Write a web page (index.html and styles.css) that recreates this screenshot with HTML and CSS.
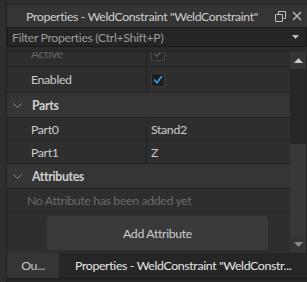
FILE: index.html
```html
<!DOCTYPE html>
<html>
<head>
<meta charset="utf-8">
<link rel="stylesheet" href="styles.css">
</head>
<body>
<div class="screen">
  <div class="leftstrip"></div>
  <div class="panel">
    <div class="topstrip"></div>
    <div class="titlebar">
      <span class="title">Properties - WeldConstraint "WeldConstraint"</span>
      <span class="winicons">
        <svg width="11" height="11" viewBox="0 0 11 11"><path d="M3.5 0.5h7v7h-2M0.5 3.5h7v7h-7z M3.5 3.5v-3" fill="none" stroke="#bdbdbd" stroke-width="1"/></svg>
        <svg width="10" height="10" viewBox="0 0 10 10"><path d="M1 1L9 9M9 1L1 9" stroke="#bdbdbd" stroke-width="1.3"/></svg>
      </span>
    </div>
    <div class="filter">
      <span class="filter-text">Filter Properties (Ctrl+Shift+P)</span>
      <svg width="7" height="4" viewBox="0 0 7 4"><path d="M0 0h7L3.5 4z" fill="#bbbbbb"/></svg>
    </div>
    <div class="body">
      <div class="viewport">
        <div class="list">
          <div class="row tall">
            <div class="name dim">Active</div>
            <div class="value"><span class="check disabled"><svg width="10" height="9" viewBox="0 0 10 9"><path d="M1 4.5L4 7.5L9 1" fill="none" stroke="#5a5a5a" stroke-width="1.4"/></svg></span></div>
          </div>
          <div class="row tall">
            <div class="name">Enabled</div>
            <div class="value"><span class="check"><svg width="10" height="9" viewBox="0 0 10 9"><path d="M1 4.5L4 7.5L9 1" fill="none" stroke="#3aa0f0" stroke-width="1.5"/></svg></span></div>
          </div>
          <div class="header">
            <svg class="chev" width="9" height="5" viewBox="0 0 9 5"><path d="M0.5 0.5L4.5 4.5L8.5 0.5" fill="none" stroke="#8a8a8a" stroke-width="1"/></svg>
            <span>Parts</span>
          </div>
          <div class="row">
            <div class="name">Part0</div>
            <div class="value">Stand2</div>
          </div>
          <div class="row">
            <div class="name">Part1</div>
            <div class="value">Z</div>
          </div>
          <div class="header">
            <svg class="chev" width="9" height="5" viewBox="0 0 9 5"><path d="M0.5 0.5L4.5 4.5L8.5 0.5" fill="none" stroke="#8a8a8a" stroke-width="1"/></svg>
            <span>Attributes</span>
          </div>
          <div class="empty">No Attribute has been added yet</div>
          <div class="btnrow"><div class="addbtn">Add Attribute</div></div>
        </div>
      </div>
      <div class="scrollbar">
        <div class="sbtn"><svg width="9" height="5" viewBox="0 0 9 5"><path d="M0 5h9L4.5 0z" fill="#c8c8c8"/></svg></div>
        <div class="track">
          <div class="thumb"></div>
        </div>
        <div class="sbtn down"><svg width="9" height="5" viewBox="0 0 9 5"><path d="M0 0h9L4.5 5z" fill="#8a8a8a"/></svg></div>
      </div>
    </div>
    <div class="tabs">
      <div class="tab">Ou...</div>
      <div class="tab active">Properties - WeldConstraint "WeldConstr...</div>
    </div>
    <div class="bottomstrip"></div>
  </div>
</div>
</body>
</html>
```
FILE: styles.css
```css
* { box-sizing: border-box; }
html, body { margin: 0; padding: 0; }
body {
  width: 307px;
  height: 282px;
  overflow: hidden;
  background: #2b2b2b;
  font-family: "Lato", "Open Sans", sans-serif;
  font-size: 12.3px;
  letter-spacing: -0.35px;
  color: #cccccc;
}
.screen {
  display: flex;
  width: 307px;
  height: 282px;
}
.leftstrip {
  width: 7px;
  flex: none;
  background: #2e2e2e;
  border-right: 1px solid #202020;
}
.panel {
  flex: 1;
  display: flex;
  flex-direction: column;
  min-width: 0;
}
.topstrip {
  height: 5px;
  flex: none;
  background: #2e2e2e;
  border-bottom: 1px solid #232323;
}
.titlebar {
  height: 22px;
  flex: none;
  background: #353535;
  display: flex;
  align-items: center;
  padding-left: 19px;
  padding-right: 5px;
}
.title {
  flex: 1;
  color: #cfcfcf;
  white-space: nowrap;
}
.winicons {
  display: flex;
  align-items: center;
  gap: 6px;
}
.winicons svg { display: block; }
.filter {
  height: 20px;
  flex: none;
  background: #252525;
  border: 1px solid #1b1b1b;
  display: flex;
  align-items: center;
  justify-content: space-between;
  padding: 0 7px 0 4px;
}
.filter-text { color: #9c9c9c; white-space: nowrap; }
.filter svg { display: block; }
.body {
  flex: 1;
  display: flex;
  min-height: 0;
  padding-top: 4px;
  background: #2b2b2b;
}
.viewport {
  flex: 1;
  overflow: hidden;
  border-top: 1px solid #232323;
}
.list {
  margin-top: -11px;
}
.row {
  display: flex;
  height: 23px;
  background: #2e2e2e;
  border-bottom: 1px solid #232323;
}
.row.tall { height: 26px; }
.name {
  width: 140px;
  flex: none;
  border-right: 1px solid #232323;
  padding-left: 24px;
  display: flex;
  align-items: center;
  white-space: nowrap;
}
.name.dim { color: #666666; }
.value {
  flex: 1;
  display: flex;
  align-items: center;
  padding-left: 4px;
  white-space: nowrap;
}
.check {
  width: 14px;
  height: 14px;
  background: #1e1e1e;
  border: 1px solid #3c3c3c;
  display: flex;
  align-items: center;
  justify-content: center;
}
.check.disabled { background: #2a2a2a; border-color: #444; }
.check svg { display: block; }
.header {
  height: 25px;
  background: #353535;
  border-bottom: 1px solid #232323;
  display: flex;
  align-items: center;
  padding-left: 6px;
  gap: 10px;
  font-weight: bold;
  color: #d0d0d0;
}
.chev { display: block; }
.empty {
  height: 23px;
  background: #2e2e2e;
  border-bottom: 1px solid #232323;
  display: flex;
  align-items: center;
  padding-left: 20px;
  color: #6a6a6a;
}
.btnrow {
  display: flex;
  padding: 4px 0 3px 40px;
  background: #2e2e2e;
}
.addbtn {
  width: 221px;
  height: 34px;
  background: #3a3a3a;
  border-radius: 3px;
  display: flex;
  align-items: center;
  justify-content: center;
  color: #cccccc;
}
.scrollbar {
  width: 17px;
  flex: none;
  display: flex;
  flex-direction: column;
  margin-top: 1px;
  background: #282828;
  border-right: 1px solid #232323;
}
.sbtn {
  height: 17px;
  flex: none;
  background: #353535;
  display: flex;
  align-items: center;
  justify-content: center;
}
.sbtn svg { display: block; }
.track {
  flex: 1;
  display: flex;
  flex-direction: column;
  justify-content: flex-end;
  background: #262626;
}
.thumb {
  height: 92px;
  background: #383838;
}
.tabs {
  height: 25px;
  flex: none;
  display: flex;
  background: #2b2b2b;
}
.tab {
  display: flex;
  align-items: center;
  white-space: nowrap;
}
.tab:first-child {
  width: 52px;
  justify-content: center;
  background: #353535;
  color: #c8c8c8;
}
.tab.active {
  flex: 1;
  padding-left: 16px;
  background: #262626;
  color: #e6e6e6;
}
.bottomstrip {
  height: 4px;
  flex: none;
  background: #262626;
  border-top: 1px solid #1f1f1f;
}
```
